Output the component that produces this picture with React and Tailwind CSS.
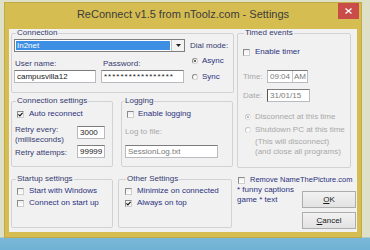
import React from "react";

const LBL = "text-[#363b70]";
const CHK = "text-[#2c3180]";
const DIS = "text-[#a8a8a8]";

function Check({ checked }) {
  return (
    <span className="w-[7px] h-[7px] shrink-0 border border-[#8a8a8a] border-r-[#cdcdcd] border-b-[#cdcdcd] bg-[linear-gradient(#eeeeee,#ffffff)] flex items-center justify-center">
      {checked && (
        <svg width="5" height="5" viewBox="0 0 5 5">
          <path d="M0.4 2.4 L1.9 3.9 L4.6 0.8" stroke="#111" strokeWidth="1.1" fill="none" />
        </svg>
      )}
    </span>
  );
}

function Radio({ on, disabled }) {
  return (
    <span
      className={`w-[6px] h-[6px] shrink-0 rounded-full border bg-white flex items-center justify-center ${
        disabled ? "border-[#c4c4c4] border-r-[#e2e2e2] border-b-[#e2e2e2]" : "border-[#8a8a8a] border-r-[#cfcfcf] border-b-[#cfcfcf]"
      }`}
    >
      {on && <span className={`w-[2px] h-[2px] rounded-full ${disabled ? "bg-[#a8a8a8]" : "bg-[#333]"}`} />}
    </span>
  );
}

function Input({ children, className = "", disabled }) {
  return (
    <div
      className={`h-[13px] bg-white border border-[#b9bbc0] border-t-[#7c7c7c] text-[8px] leading-[11px] px-[2px] whitespace-nowrap overflow-hidden ${
        disabled ? "text-[#7a7a7a]" : "text-[#222]"
      } ${className}`}
    >
      {children}
    </div>
  );
}

function Group({ label, className = "", legendClass = "", children }) {
  return (
    <fieldset className={`border border-[#d2d2d2] rounded-[2px] px-[2px] min-w-0 ${className}`}>
      <legend className={`text-[8px] leading-[8px] px-[1px] whitespace-nowrap ${LBL} ${legendClass}`}>{label}</legend>
      {children}
    </fieldset>
  );
}

function Btn({ children }) {
  return (
    <div className="h-[17px] border border-[#adadad] bg-[linear-gradient(#f2f2f2,#e2e2e2)] text-[8px] text-[#1a1a1a] flex items-center justify-center">
      {children}
    </div>
  );
}

export default function App() {
  return (
    <div className="w-[370px] h-[250px] overflow-hidden pt-[2px] pl-[4px] bg-[linear-gradient(to_bottom,#dfe0c8_0px,#dfe0c8_237px,#7ab8d7_238px,#6fb1d4_250px)] font-['Liberation_Sans',Arial,sans-serif]">
      <div className="w-[358px] h-[236px] bg-[#d6bd52] border border-[#c3a947] flex flex-col">
        {/* title bar */}
        <div className="h-[26px] shrink-0 grid grid-cols-[21px_1fr_21px] px-[2px]">
          <div />
          <div className="text-[11px] leading-[22px] text-[#3c3c3c] text-center whitespace-nowrap">
            ReConnect v1.5 from nToolz.com - Settings
          </div>
          <div className="h-[16px] bg-[#c94c48] flex items-center justify-center">
            <svg width="7" height="6" viewBox="0 0 7 6">
              <path d="M0.5 0.5 L6.5 5.5 M6.5 0.5 L0.5 5.5" stroke="#fff" strokeWidth="1.3" />
            </svg>
          </div>
        </div>

        {/* client */}
        <div className="mx-[4px] h-[203px] bg-[#f1f1f1] flex items-start">
          {/* left column */}
          <div className="ml-[2px] w-[223px] flex flex-col">
            <Group label="Connection" className="h-[64px]" legendClass="ml-[2px]">
              <div className="flex pt-[2px]">
                <div className="w-[171px]">
                  <div className="h-[13px] flex border border-[#7f7f7f] bg-white">
                    <div className="flex-1 m-[1px] bg-[#3d8fe3] text-white text-[8px] leading-[9px] pl-[1px]">In2net</div>
                    <div className="w-[13px] bg-[#f3f3f3] border-l border-[#c3c3c3] flex items-center justify-center">
                      <svg width="5" height="3" viewBox="0 0 5 3">
                        <path d="M0 0 L5 0 L2.5 3 Z" fill="#222" />
                      </svg>
                    </div>
                  </div>
                  <div className={`mt-[7px] grid grid-cols-[82px_83px] gap-x-[5px] text-[8px] leading-[10px] ${LBL}`}>
                    <div className="pl-[1px]">User name:</div>
                    <div className="pl-[2px]">Password:</div>
                  </div>
                  <div className="mt-[1px] grid grid-cols-[82px_83px] gap-x-[5px]">
                    <Input>campusvilla12</Input>
                    <Input className="tracking-[1px]">*****************</Input>
                  </div>
                </div>
                <div className="ml-[5px] text-[8px]">
                  <div className={`mt-[2px] leading-[10px] ${LBL}`}>Dial mode:</div>
                  <div className={`mt-[5px] h-[10px] ml-[2px] flex items-center gap-[4px] ${CHK}`}>
                    <Radio on />
                    <span>Async</span>
                  </div>
                  <div className={`mt-[6px] h-[10px] ml-[2px] flex items-center gap-[4px] ${CHK}`}>
                    <Radio />
                    <span>Sync</span>
                  </div>
                </div>
              </div>
            </Group>

            <div className="mt-[4px] flex h-[70px]">
              <Group label="Connection settings" className="w-[102px] h-full" legendClass="ml-[2px]">
                <div className={`mt-[4px] h-[10px] ml-[3px] flex items-center gap-[5px] text-[8px] ${CHK}`}>
                  <Check checked />
                  <span className="whitespace-nowrap">Auto reconnect</span>
                </div>
                <div className={`mt-[6px] ml-[1px] grid grid-cols-[62px_28px] text-[8px] leading-[10px] ${LBL}`}>
                  <div className="whitespace-nowrap">
                    Retry every:
                    <br />
                    (milliseconds)
                  </div>
                  <Input className="mt-[1px]">3000</Input>
                  <div className="whitespace-nowrap pt-[3px]">Retry attemps:</div>
                  <Input>99999</Input>
                </div>
              </Group>

              <Group label="Logging" className="ml-[8px] w-[112px] h-full" legendClass="ml-0">
                <div className={`mt-[4px] h-[10px] ml-[3px] flex items-center gap-[4px] text-[8px] ${CHK}`}>
                  <Check />
                  <span className="whitespace-nowrap">Enable logging</span>
                </div>
                <div className={`mt-[8px] ml-[1px] text-[8px] leading-[10px] ${DIS}`}>Log to file:</div>
                <Input disabled className="mt-[8px] ml-[1px] w-[93px]">SessionLog.txt</Input>
              </Group>
            </div>

            <div className="mt-[8px] flex h-[53px]">
              <Group label="Startup settings" className="w-[102px] h-full" legendClass="ml-[2px]">
                <div className={`pt-[3px] flex flex-col gap-[2px] text-[8px] ${CHK}`}>
                  <div className="h-[10px] ml-[3px] flex items-center gap-[5px]">
                    <Check />
                    <span className="whitespace-nowrap">Start with Windows</span>
                  </div>
                  <div className="h-[10px] ml-[3px] flex items-center gap-[5px]">
                    <Check />
                    <span className="whitespace-nowrap">Connect on start up</span>
                  </div>
                </div>
              </Group>
              <Group label="Other Settings" className="ml-[5px] w-[114px] h-full" legendClass="ml-[5px]">
                <div className={`pt-[3px] flex flex-col gap-[2px] text-[8px] ${CHK}`}>
                  <div className="h-[10px] ml-[4px] flex items-center gap-[5px]">
                    <Check />
                    <span className="whitespace-nowrap">Minimize on connected</span>
                  </div>
                  <div className="h-[10px] ml-[4px] flex items-center gap-[5px]">
                    <Check checked />
                    <span className="whitespace-nowrap">Always on top</span>
                  </div>
                </div>
              </Group>
            </div>
          </div>

          {/* right column */}
          <div className="ml-[3px] w-[120px] flex flex-col">
            <Group label="Timed events" className="w-[114px] h-[139px]" legendClass="ml-[4px]">
              <div className={`mt-[10px] h-[10px] ml-[3px] flex items-center gap-[5px] text-[8px] ${CHK}`}>
                <Check />
                <span className="whitespace-nowrap">Enable timer</span>
              </div>
              <div className="mt-[13px] h-[13px] ml-[3px] flex items-center text-[8px]">
                <span className={`w-[24px] ${DIS}`}>Time:</span>
                <Input disabled className="w-[41px] flex">
                  <span>09:04</span>
                  <span className="ml-[2px] pl-[1px] border-l border-[#c8c8c8]">AM</span>
                </Input>
              </div>
              <div className="mt-[6px] h-[13px] ml-[3px] flex items-center text-[8px]">
                <span className={`w-[24px] ${DIS}`}>Date:</span>
                <Input disabled className="w-[43px] border-l-[#555]">31/01/15</Input>
              </div>
              <div className={`mt-[10px] h-[10px] ml-[5px] flex items-center gap-[4px] text-[8px] ${DIS}`}>
                <Radio on disabled />
                <span className="whitespace-nowrap">Disconnect at this time</span>
              </div>
              <div className={`mt-[3px] h-[10px] ml-[5px] flex items-center gap-[4px] text-[8px] ${DIS}`}>
                <Radio disabled />
                <span className="whitespace-nowrap">Shutdown PC at this time</span>
              </div>
              <div className={`mt-[2px] ml-[15px] text-[8px] leading-[10px] whitespace-nowrap ${DIS}`}>
                (This will disconnect)
                <br />
                (and close all programs)
              </div>
            </Group>

            <div className={`mt-[7px] h-[10px] ml-[1px] flex items-center gap-[5px] ${CHK}`}>
              <Check />
              <span className="text-[7.5px] whitespace-nowrap">Remove NameThePicture.com</span>
            </div>
            <div className="flex">
              <div className={`text-[8px] leading-[10px] whitespace-nowrap ${CHK}`}>
                * funny captions
                <br />
                game * text
              </div>
              <div className="ml-auto mr-[1px] mt-[6px] w-[54px] flex flex-col gap-[4px]">
                <Btn>
                  <span>
                    <span className="underline">O</span>K
                  </span>
                </Btn>
                <Btn>
                  <span>
                    <span className="underline">C</span>ancel
                  </span>
                </Btn>
              </div>
            </div>
          </div>
        </div>
      </div>
    </div>
  );
}
